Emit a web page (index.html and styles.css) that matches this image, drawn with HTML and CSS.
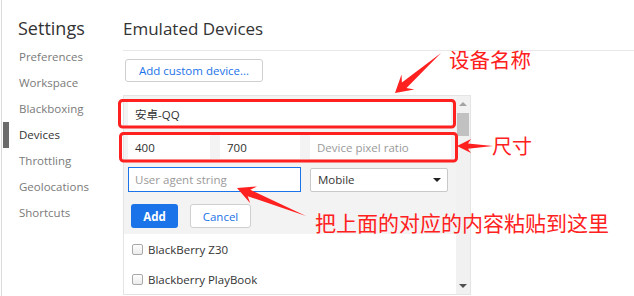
FILE: index.html
```html
<!DOCTYPE html>
<html lang="zh-CN">
<head>
<meta charset="utf-8">
<title>Settings - Emulated Devices</title>
<link rel="stylesheet" href="styles.css">
</head>
<body>
<div class="app">
  <div class="rail"></div>
  <aside class="sidebar">
    <h1 class="title">Settings</h1>
    <nav class="nav">
      <div class="nav-item">Preferences</div>
      <div class="nav-item">Workspace</div>
      <div class="nav-item">Blackboxing</div>
      <div class="nav-item selected">Devices</div>
      <div class="nav-item">Throttling</div>
      <div class="nav-item">Geolocations</div>
      <div class="nav-item">Shortcuts</div>
    </nav>
  </aside>
  <main class="main">
    <h2 class="heading">Emulated Devices</h2>
    <div class="toolbar"><button class="btn">Add custom device...</button></div>
    <div class="list">
      <div class="list-body">
        <div class="editor">
          <div class="row row-name">
            <input class="field f-name" value="安卓-QQ">
          </div>
          <div class="row row-size">
            <input class="field f-w" value="400">
            <input class="field f-h" value="700">
            <input class="field f-dpr" placeholder="Device pixel ratio">
          </div>
          <div class="row row-ua">
            <input class="field f-ua focused" placeholder="User agent string">
            <div class="select"><span>Mobile</span><span class="caret"></span></div>
          </div>
          <div class="row row-buttons">
            <button class="btn-primary">Add</button>
            <button class="btn-cancel">Cancel</button>
          </div>
        </div>
        <div class="item"><span class="checkbox"></span>BlackBerry Z30</div>
        <div class="item"><span class="checkbox"></span>Blackberry PlayBook</div>
      </div>
      <div class="scrollbar">
        <span class="arrow-up"></span>
        <span class="thumb"></span>
        <span class="spacer"></span>
        <span class="arrow-down"></span>
      </div>
    </div>
  </main>
</div>

<svg class="annot" width="634" height="296" viewBox="0 0 634 296">
  <rect x="119.5" y="100.5" width="335" height="26.5" rx="3" class="mark"/>
  <rect x="120.5" y="133.5" width="336" height="27.5" rx="3" class="mark"/>
  <polygon class="arrow" points="441,53 406.5,87.9 414.4,89.6 395,93 401.5,74.4 401.9,82.5"/>
  <polygon class="arrow" points="493,146 468,148.8 471,153 457,146 471,139 468,143.6"/>
  <polygon class="arrow" points="306,216 250.3,189.8 257.1,186.5 237,188 250.2,203.2 247.7,196.2"/>
</svg>
<div class="label label-name">设备名称</div>
<div class="label label-size">尺寸</div>
<div class="label label-paste">把上面的对应的内容粘贴到这里</div>
</body>
</html>
```

FILE: styles.css
```css
* { box-sizing: border-box; }
html, body {
  margin: 0;
  padding: 0;
  width: 634px;
  height: 296px;
  overflow: hidden;
  background: #fff;
}
body {
  position: relative;
  font-family: "Open Sans", "Noto Sans", "Noto Sans CJK SC", sans-serif;
  font-size: 11.5px;
  color: #333;
}
.app {
  display: flex;
  height: 296px;
}
.rail {
  width: 1px;
  margin: 0 1px 0 1px;
  background: #dadada;
  flex: none;
}
.sidebar {
  width: 120px;
  flex: none;
}
.title {
  margin: 15px 0 0 15px;
  height: 29px;
  font-size: 18px;
  line-height: 26px;
  font-weight: 400;
  color: #333;
}
.nav {
  display: flex;
  flex-direction: column;
}
.nav-item {
  height: 26px;
  line-height: 26px;
  border-left: 6px solid transparent;
  padding-left: 10px;
  color: #7a7a7a;
  font-size: 11.5px;
}
.nav-item.selected {
  border-left-color: #6b6b6b;
  color: #333;
}
.main {
  flex: 1;
  display: flex;
  flex-direction: column;
}
.heading {
  margin: 17px 0 0 0;
  padding-bottom: 9px;
  height: 34px;
  line-height: 24px;
  font-size: 17px;
  font-weight: 400;
  color: #333;
  border-bottom: 1px solid #e8e8e8;
}
.toolbar {
  padding: 8px 0 0 2px;
  height: 44px;
}
.btn {
  height: 23px;
  width: 138px;
  padding: 0;
  border: 1px solid #cfcfcf;
  border-radius: 3px;
  background: #fff;
  color: #1a73e8;
  font-family: inherit;
  font-size: 11.5px;
}
.list {
  width: 348px;
  height: 200px;
  border: 1px solid #e4e4e4;
  display: flex;
}
.list-body {
  flex: 1;
  display: flex;
  flex-direction: column;
}
.editor {
  background: #f3f3f3;
  padding: 6px 5px 6px 4px;
  display: flex;
  flex-direction: column;
}
.row {
  display: flex;
  align-items: center;
}
.row-size { margin-top: 9px; }
.row-ua { margin-top: 8px; }
.row-buttons { margin-top: 12px; padding-left: 3px; gap: 12px; }
.field {
  height: 24px;
  border: 1px solid #fff;
  background: #fff;
  padding: 0 6px;
  font-family: "Open Sans", "Noto Sans CJK SC", sans-serif;
  font-size: 11.5px;
  color: #303030;
  outline: none;
  margin: 0;
}
.field::placeholder { color: #9a9a9a; }
.f-name { width: 323px; }
.f-w { width: 82px; }
.f-h { width: 80px; margin-left: 10px; }
.f-dpr { width: 141px; margin-left: 10px; }
.f-ua { width: 173px; height: 25px; }
.focused { border-color: #1a73e8; }
.select {
  margin-left: 9px;
  width: 138px;
  height: 24px;
  border: 1px solid #c9c9c9;
  border-radius: 2px;
  background: #fff;
  display: flex;
  align-items: center;
  justify-content: space-between;
  padding: 0 6px 0 7px;
  color: #333;
}
.caret {
  width: 0;
  height: 0;
  border-left: 4px solid transparent;
  border-right: 4px solid transparent;
  border-top: 4px solid #222;
}
.btn-primary {
  width: 47px;
  height: 24px;
  border: none;
  border-radius: 3px;
  background: #1a73e8;
  color: #fff;
  font-family: inherit;
  font-size: 11.5px;
  font-weight: 700;
  padding: 0;
}
.btn-cancel {
  width: 61px;
  height: 24px;
  border: 1px solid #cfcfcf;
  border-radius: 3px;
  background: #fff;
  color: #1a73e8;
  font-family: inherit;
  font-size: 11.5px;
  padding: 0;
}
.item {
  height: 30px;
  display: flex;
  align-items: center;
  padding-left: 8px;
  color: #333;
}
.checkbox {
  width: 11px;
  height: 11px;
  border: 1px solid #a9a9a9;
  border-radius: 2px;
  background: linear-gradient(#fdfdfd, #ececec);
  margin-right: 5px;
}
.scrollbar {
  width: 14px;
  background: #f1f1f1;
  display: flex;
  flex-direction: column;
  align-items: center;
}
.arrow-up {
  margin-top: 6px;
  width: 0;
  height: 0;
  border-left: 4px solid transparent;
  border-right: 4px solid transparent;
  border-bottom: 4px solid #a3a3a3;
}
.thumb {
  margin-top: 7px;
  width: 12px;
  height: 23px;
  background: #c1c1c1;
}
.spacer { flex: 1; }
.arrow-down {
  margin-bottom: 6px;
  width: 0;
  height: 0;
  border-left: 4px solid transparent;
  border-right: 4px solid transparent;
  border-top: 4px solid #505050;
}
.annot {
  position: absolute;
  left: 0;
  top: 0;
  pointer-events: none;
}
.mark {
  fill: none;
  stroke: #ff2020;
  stroke-width: 3;
}
.arrow {
  fill: #ff2020;
}
.label {
  position: absolute;
  font-family: "Noto Sans CJK SC", sans-serif;
  color: #ff2020;
  line-height: 1;
  white-space: nowrap;
}
.label-name { left: 449px; top: 49px; font-size: 20.5px; }
.label-size { left: 492px; top: 136px; font-size: 20px; }
.label-paste { left: 315px; top: 212px; font-size: 21px; }
```
